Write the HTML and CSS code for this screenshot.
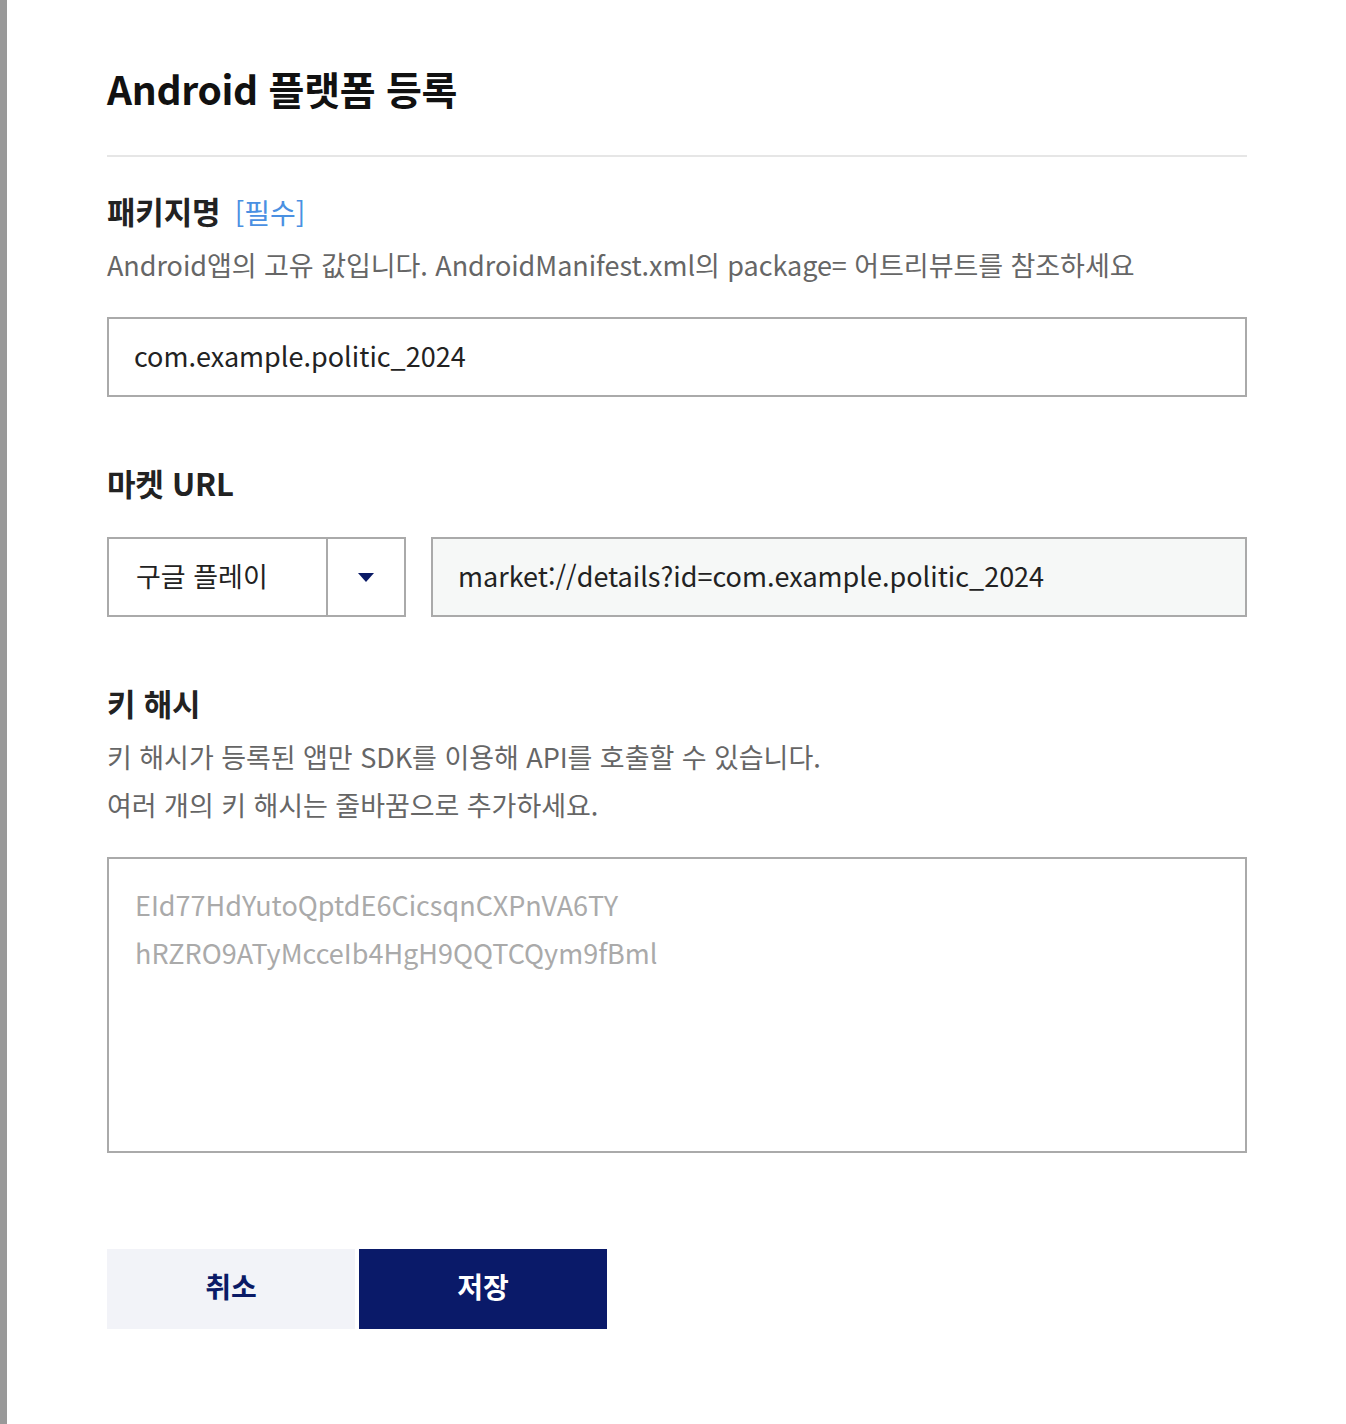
FILE: index.html
```html
<!DOCTYPE html>
<html lang="ko">
<head>
<meta charset="utf-8">
<title>Android 플랫폼 등록</title>
<link rel="stylesheet" href="styles.css">
</head>
<body>
<div class="page">
  <div class="backdrop"></div>
  <main class="dialog">
    <h1 class="title">Android 플랫폼 등록</h1>
    <hr class="divider">

    <section class="field">
      <div class="label">패키지명 <span class="req">[필수]</span></div>
      <p class="desc">Android앱의 고유 값입니다. AndroidManifest.xml의 package= 어트리뷰트를 참조하세요</p>
      <input class="input" type="text" value="com.example.politic_2024">
    </section>

    <section class="field field-gap">
      <div class="label">마켓 URL</div>
      <div class="market-row">
        <div class="select">
          <div class="select-value">구글 플레이</div>
          <div class="select-arrow"><span class="tri"></span></div>
        </div>
        <input class="input input-ro" type="text" value="market://details?id=com.example.politic_2024" readonly>
      </div>
    </section>

    <section class="field field-gap">
      <div class="label">키 해시</div>
      <p class="desc">키 해시가 등록된 앱만 SDK를 이용해 API를 호출할 수 있습니다.<br>여러 개의 키 해시는 줄바꿈으로 추가하세요.</p>
      <textarea class="textarea" placeholder="EId77HdYutoQptdE6CicsqnCXPnVA6TY&#10;hRZRO9ATyMcceIb4HgH9QQTCQym9fBml"></textarea>
    </section>

    <div class="actions">
      <button class="btn btn-cancel" type="button">취소</button>
      <button class="btn btn-save" type="button">저장</button>
    </div>
  </main>
</div>
</body>
</html>
```
FILE: styles.css
```css
html, body {
  margin: 0;
  padding: 0;
  background: #ffffff;
}
body {
  font-family: "Noto Sans CJK KR", "Noto Sans", sans-serif;
  color: #222222;
}
.page {
  display: flex;
  min-height: 1424px;
}
.backdrop {
  width: 7px;
  flex: 0 0 7px;
  background: #999999;
}
.dialog {
  flex: 0 0 1140px;
  padding: 65px 0 0 100px;
}
.title {
  margin: 0;
  font-size: 39px;
  line-height: 46px;
  font-weight: 700;
  color: #111111;
  letter-spacing: -0.3px;
}
.divider {
  margin: 44px 0 0;
  border: 0;
  height: 2px;
  background: #e6e6e6;
}
.field {
  margin-top: 34px;
}
.field-gap {
  margin-top: 66px;
}
.label {
  height: 40px;
  font-size: 31px;
  line-height: 40px;
  font-weight: 700;
  color: #222222;
  letter-spacing: -0.2px;
}
.req {
  margin-left: 6px;
  font-size: 28px;
  line-height: 1;
  font-weight: 400;
  color: #4a90e2;
  letter-spacing: 0;
}
.desc {
  margin: 10px 0 0;
  font-size: 27px;
  line-height: 48px;
  color: #666666;
  letter-spacing: -0.05px;
}
.input {
  display: block;
  box-sizing: border-box;
  width: 100%;
  height: 80px;
  margin: 28px 0 0;
  padding: 0 25px 4px;
  border: 2px solid #aaaaaa;
  border-radius: 0;
  background: #ffffff;
  font-family: inherit;
  font-size: 27px;
  color: #222222;
  outline: none;
}
.market-row {
  display: flex;
  gap: 25px;
  margin-top: 34px;
}
.market-row .input {
  margin: 0;
  flex: 1;
  width: auto;
}
.input-ro {
  background: #f6f8f7;
}
.select {
  box-sizing: border-box;
  flex: 0 0 299px;
  height: 80px;
  display: flex;
  border: 2px solid #aaaaaa;
  background: #ffffff;
}
.select-value {
  flex: 1;
  display: flex;
  align-items: center;
  padding: 0 0 4px 27px;
  font-size: 27px;
  color: #222222;
  border-right: 2px solid #aaaaaa;
}
.select-arrow {
  flex: 0 0 76px;
  display: flex;
  align-items: center;
  justify-content: center;
}
.tri {
  width: 0;
  height: 0;
  border-left: 8px solid transparent;
  border-right: 8px solid transparent;
  border-top: 9px solid #0a1a66;
}
.textarea {
  display: block;
  box-sizing: border-box;
  width: 100%;
  height: 296px;
  margin: 28px 0 0;
  padding: 22px 26px;
  border: 2px solid #aaaaaa;
  border-radius: 0;
  font-family: inherit;
  font-size: 27px;
  line-height: 48px;
  color: #222222;
  resize: none;
  outline: none;
}
.textarea::placeholder {
  color: #aaaaaa;
  opacity: 1;
}
.actions {
  display: flex;
  gap: 4px;
  margin-top: 96px;
}
.btn {
  width: 248px;
  height: 80px;
  padding: 0 0 6px;
  border: 0;
  border-radius: 0;
  font-family: inherit;
  font-size: 28px;
  font-weight: 700;
  cursor: pointer;
}
.btn-cancel {
  background: #f2f3f8;
  color: #0a1a66;
}
.btn-save {
  background: #0a1a69;
  color: #ffffff;
}
```
